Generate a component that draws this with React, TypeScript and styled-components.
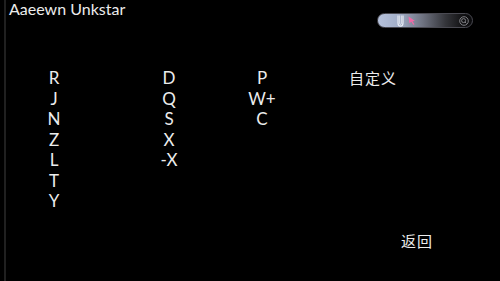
import React from "react";
import styled, { createGlobalStyle } from "styled-components";

const Global = createGlobalStyle`
  html, body { margin: 0; padding: 0; background: #000; }
  body { width: 500px; height: 281px; overflow: hidden; }
`;

const Page = styled.div`
  width: 500px;
  height: 281px;
  background: #000;
  padding-left: 4px;
  box-sizing: border-box;
  display: flex;
  font-family: Lato, "Noto Sans CJK SC", sans-serif;
  color: #ececec;
`;

const Frame = styled.div`
  flex: 1;
  border-left: 2px solid #202020;
  display: flex;
  flex-direction: column;
`;

const Header = styled.div`
  display: flex;
  justify-content: space-between;
  align-items: flex-start;
`;

const Title = styled.div`
  font-size: 16px;
  font-weight: 400;
  line-height: 17px;
  margin-left: 3px;
`;

const SearchBar = styled.div`
  width: 96px;
  height: 15px;
  margin-top: 13px;
  margin-right: 27px;
  box-sizing: border-box;
  border-radius: 8px;
  border: 1px solid #4a4a52;
  background: linear-gradient(90deg, #b6c2dc 0%, #a2aec8 22%, #6e7280 48%, #34353a 72%, #121214 90%, #0a0a0c 100%);
  display: flex;
  align-items: center;
  padding: 0 3px 0 19px;
  gap: 4px;
`;

const Spacer = styled.div`
  flex: 1;
`;

const Grid = styled.div`
  display: grid;
  grid-template-columns: 96px 134px 52px auto;
  margin-top: 40px;
  font-size: 17px;
  line-height: 20.5px;
`;

const Column = styled.div<{ $left?: boolean; $pad?: number }>`
  display: flex;
  flex-direction: column;
  align-items: ${(p) => (p.$left ? "flex-start" : "center")};
  padding-left: ${(p) => p.$pad ?? 0}px;
`;

const Item = styled.div<{ $cjk?: boolean }>`
  font-size: ${(p) => (p.$cjk ? 15 : 17)}px;
  letter-spacing: ${(p) => (p.$cjk ? 1 : 0)}px;
`;

const Footer = styled.div`
  margin-top: auto;
  margin-bottom: 30px;
  display: flex;
  justify-content: flex-end;
  padding-right: 67px;
  font-size: 14px;
`;

const columns: string[][] = [
  ["R", "J", "N", "Z", "L", "T", "Y"],
  ["D", "Q", "S", "X", "-X"],
  ["P", "W+", "C"],
];

export default function App() {
  return (
    <>
      <Global />
      <Page>
        <Frame>
          <Header>
            <Title>Aaeewn Unkstar</Title>
            <SearchBar>
              <svg width="7" height="12" viewBox="0 0 7 12">
                <path d="M1 0.5 V8 Q1 11.2 3.5 11.2 Q6 11.2 6 8 V0.5" fill="none" stroke="#e8ecf4" strokeWidth="1.2" />
                <path d="M2.6 0.5 V8 Q2.6 9.5 3.5 9.5 Q4.4 9.5 4.4 8 V0.5" fill="none" stroke="#e8ecf4" strokeWidth="0.8" />
              </svg>
              <svg width="8" height="9" viewBox="0 0 8 9">
                <path d="M0.5 0.5 L7 5 L4.5 5.3 L6.5 8.3 L5.2 8.8 L3.4 5.8 L1.3 7.3 Z" fill="#f06aa6" />
              </svg>
              <Spacer />
              <svg width="10" height="10" viewBox="0 0 10 10">
                <circle cx="5" cy="5" r="4.3" fill="none" stroke="#8a8a90" strokeWidth="0.9" />
                <circle cx="4.6" cy="4.6" r="2" fill="none" stroke="#8a8a90" strokeWidth="0.9" />
                <path d="M6 6 L7.3 7.3" stroke="#8a8a90" strokeWidth="0.9" />
              </svg>
            </SearchBar>
          </Header>
          <Grid>
            {columns.map((col, i) => (
              <Column key={i}>
                {col.map((t) => (
                  <Item key={t}>{t}</Item>
                ))}
              </Column>
            ))}
            <Column $left $pad={61}>
              <Item $cjk>自定义</Item>
            </Column>
          </Grid>
          <Footer>
            <Item $cjk>返回</Item>
          </Footer>
        </Frame>
      </Page>
    </>
  );
}
